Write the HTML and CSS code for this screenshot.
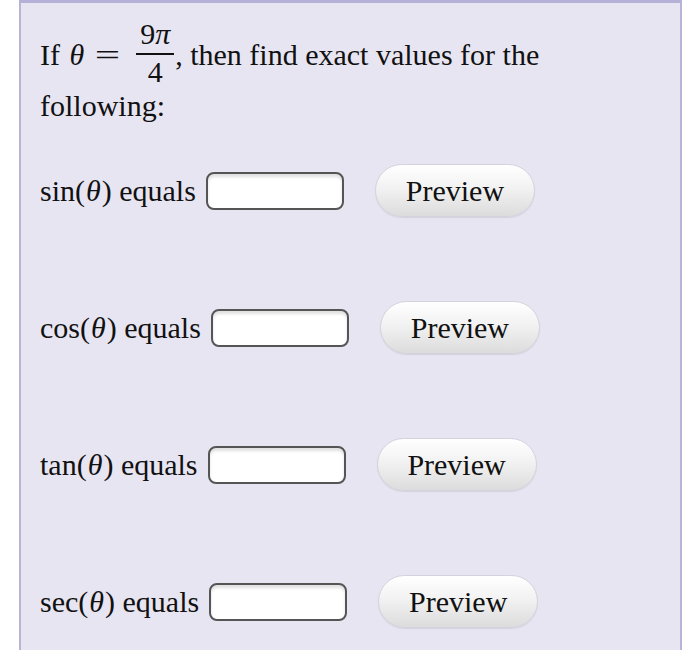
FILE: index.html
```html
<!DOCTYPE html>
<html>
<head>
  <meta charset="UTF-8">
  <link rel="stylesheet" href="styles.css">
</head>
<body>
  <div class="problem">
    <div class="question">
      If <i class="var">θ</i> <span class="eq">=</span>
      <span class="frac"><span class="num">9<i>π</i></span><span class="den">4</span></span>, then find exact values for the
      following:
    </div>

    <div class="answer-row">
      <span class="label">sin(<i>θ</i>) equals</span>
      <input type="text" class="answer">
      <button class="preview">Preview</button>
    </div>
    <div class="answer-row">
      <span class="label">cos(<i>θ</i>) equals</span>
      <input type="text" class="answer">
      <button class="preview">Preview</button>
    </div>
    <div class="answer-row">
      <span class="label">tan(<i>θ</i>) equals</span>
      <input type="text" class="answer">
      <button class="preview">Preview</button>
    </div>
    <div class="answer-row">
      <span class="label">sec(<i>θ</i>) equals</span>
      <input type="text" class="answer">
      <button class="preview">Preview</button>
    </div>
  </div>
</body>
</html>
```

FILE: styles.css
```css
body {
  margin: 0;
  background-color: #fff;
  font-family: "Liberation Serif", "Times New Roman", serif;
  color: #111;
}

.problem {
  margin-left: 19px;
  width: 621px;
  height: 660px;
  padding: 0 19px;
  background-color: #e8e5f2;
  border-top: 3px solid #b4b1d9;
  border-left: 2px solid #b7b4d8;
  border-right: 2px solid #b7b4d8;
}

.question {
  max-width: 540px;
  font-size: 30px;
  line-height: 51px;
  padding-top: 26px;
}
.question .var {
  margin: 0 2px;
}
.eq {
  display: inline-block;
  margin: 0 3px 0 5px;
  transform: scaleX(1.5);
}
.frac {
  display: inline-flex;
  flex-direction: column;
  align-items: center;
  vertical-align: middle;
  line-height: 30px;
  margin: -14px 1px -14px 10px;
  position: relative;
  top: -5px;
}
.frac .num {
  padding: 0 4px 4px;
  border-bottom: 2px solid #111;
}
.frac .den {
  padding-top: 2px;
}

.answer-row {
  display: flex;
  align-items: center;
  height: 53px;
  margin-top: 33px;
  font-size: 30px;
}
.answer-row + .answer-row {
  margin-top: 84px;
}
.label i {
  margin: 0 1px;
}

.answer {
  width: 138px;
  height: 38px;
  box-sizing: border-box;
  margin-left: 10px;
  border: 2px solid #555;
  border-radius: 8px;
  background-color: #fff;
  box-shadow: inset 0 3px 3px rgba(0, 0, 0, 0.12);
}

.preview {
  width: 160px;
  height: 53px;
  margin-left: 31px;
  border: 1px solid #d4d2dc;
  border-radius: 27px;
  background: linear-gradient(#ffffff, #f2f2f2 45%, #dcdcdc);
  box-shadow: 0 1px 1px rgba(0, 0, 0, 0.08);
  font-family: "Liberation Serif", "Times New Roman", serif;
  font-size: 30px;
  color: #111;
}
```
